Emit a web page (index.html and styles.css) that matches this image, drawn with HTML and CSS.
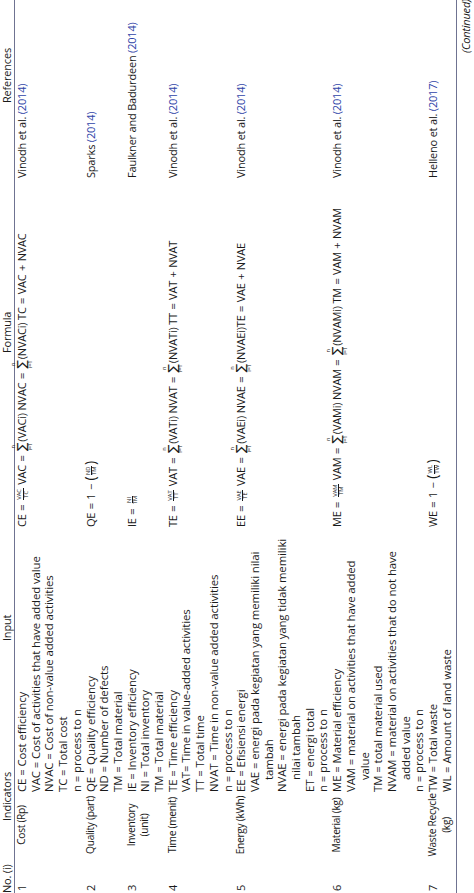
FILE: index.html
```html
<!DOCTYPE html>
<html>
<head>
<meta charset="utf-8">
<link rel="stylesheet" href="styles.css">
</head>
<body>
<div class="viewport">
  <div class="page">
    <div class="thead">
      <div class="th th-no">No. (i)</div>
      <div class="th">Indicators</div>
      <div class="th">Input</div>
      <div class="th">Formula</div>
      <div class="th">References</div>
    </div>
    <div class="tbody">
      <div class="row">
        <div class="no">1</div>
        <div class="ind"><span>Cost (Rp)</span></div>
        <div class="inp">
          <div class="ln">CE = Cost efficiency</div>
          <div class="ln">VAC = Cost of activities that have added value</div>
          <div class="ln">NVAC = Cost of non-value added activities</div>
          <div class="ln">TC = Total cost</div>
          <div class="ln">n = process to n</div>
        </div>
        <div class="fml">CE<span class="eq">=</span><span class="frac"><span class="nu">VAC</span><span class="de">TC</span></span> VAC<span class="eq">=</span><span class="sum"><span class="up">n</span><span class="sig">∑</span><span class="dn">i=1</span></span>(VACi) NVAC<span class="eq">=</span><span class="sum"><span class="up">n</span><span class="sig">∑</span><span class="dn">i=1</span></span>(NVACi) TC<span class="eq">=</span>VAC<span class="op">+</span>NVAC</div>
        <div class="ref">Vinodh et al. <span class="yr">(2014)</span></div>
      </div>
      <div class="row">
        <div class="no">2</div>
        <div class="ind"><span>Quality (part)</span></div>
        <div class="inp">
          <div class="ln">QE = Quality efficiency</div>
          <div class="ln">ND = Number of defects</div>
          <div class="ln">TM = Total material</div>
        </div>
        <div class="fml">QE<span class="eq">=</span>1<span class="op">−</span><span class="bp">(</span><span class="frac"><span class="nu">ND</span><span class="de">TM</span></span><span class="bp">)</span></div>
        <div class="ref">Sparks <span class="yr">(2014)</span></div>
      </div>
      <div class="row">
        <div class="no">3</div>
        <div class="ind"><span>Inventory</span><span>(unit)</span></div>
        <div class="inp">
          <div class="ln">IE = Inventory efficiency</div>
          <div class="ln">NI = Total inventory</div>
          <div class="ln">TM = Total material</div>
        </div>
        <div class="fml">IE<span class="eq">=</span><span class="frac"><span class="nu">NI</span><span class="de">TM</span></span></div>
        <div class="ref">Faulkner and Badurdeen <span class="yr">(2014)</span></div>
      </div>
      <div class="row">
        <div class="no">4</div>
        <div class="ind"><span>Time (menit)</span></div>
        <div class="inp">
          <div class="ln">TE = Time efficiency</div>
          <div class="ln">VAT= Time in value-added activities</div>
          <div class="ln">TT = Total time</div>
          <div class="ln">NVAT = Time in non-value added activities</div>
          <div class="ln">n = process to n</div>
        </div>
        <div class="fml">TE<span class="eq">=</span><span class="frac"><span class="nu">VAT</span><span class="de">TT</span></span> VAT<span class="eq">=</span><span class="sum"><span class="up">n</span><span class="sig">∑</span><span class="dn">i=1</span></span>(VATi) NVAT<span class="eq">=</span><span class="sum"><span class="up">n</span><span class="sig">∑</span><span class="dn">i=1</span></span>(NVATi) TT<span class="eq">=</span>VAT<span class="op">+</span>NVAT</div>
        <div class="ref">Vinodh et al. <span class="yr">(2014)</span></div>
      </div>
      <div class="row">
        <div class="no">5</div>
        <div class="ind"><span>Energy (kWh)</span></div>
        <div class="inp">
          <div class="ln">EE = Efisiensi energi</div>
          <div class="ln">VAE = energi pada kegiatan yang memiliki nilai</div>
          <div class="ln cont">tambah</div>
          <div class="ln">NVAE = energi pada kegiatan yang tidak memiliki</div>
          <div class="ln cont">nilai tambah</div>
          <div class="ln">ET = energi total</div>
          <div class="ln">n = process to n</div>
        </div>
        <div class="fml">EE<span class="eq">=</span><span class="frac"><span class="nu">VAE</span><span class="de">TE</span></span> VAE<span class="eq">=</span><span class="sum"><span class="up">n</span><span class="sig">∑</span><span class="dn">i=1</span></span>(VAEi) NVAE<span class="eq">=</span><span class="sum"><span class="up">n</span><span class="sig">∑</span><span class="dn">i=1</span></span>(NVAEi)TE<span class="eq">=</span>VAE<span class="op">+</span>NVAE</div>
        <div class="ref">Vinodh et al. <span class="yr">(2014)</span></div>
      </div>
      <div class="row">
        <div class="no">6</div>
        <div class="ind"><span>Material (kg)</span></div>
        <div class="inp">
          <div class="ln">ME = Material efficiency</div>
          <div class="ln">VAM = material on activities that have added</div>
          <div class="ln cont">value</div>
          <div class="ln">TM = total material used</div>
          <div class="ln">NVAM = material on activities that do not have</div>
          <div class="ln cont">added value</div>
          <div class="ln">n = process to n</div>
        </div>
        <div class="fml">ME<span class="eq">=</span><span class="frac"><span class="nu">VAM</span><span class="de">TM</span></span> VAM<span class="eq">=</span><span class="sum"><span class="up">n</span><span class="sig">∑</span><span class="dn">i=1</span></span>(VAMi) NVAM<span class="eq">=</span><span class="sum"><span class="up">n</span><span class="sig">∑</span><span class="dn">i=1</span></span>(NVAMi) TM<span class="eq">=</span>VAM<span class="op">+</span>NVAM</div>
        <div class="ref">Vinodh et al. <span class="yr">(2014)</span></div>
      </div>
      <div class="row">
        <div class="no">7</div>
        <div class="ind"><span>Waste Recycle</span><span>(kg)</span></div>
        <div class="inp">
          <div class="ln">TW = Total waste</div>
          <div class="ln">WL = Amount of land waste</div>
        </div>
        <div class="fml">WE<span class="eq">=</span>1<span class="op">−</span><span class="bp">(</span><span class="frac"><span class="nu">WL</span><span class="de">TW</span></span><span class="bp">)</span></div>
        <div class="ref">Helleno et al. <span class="yr">(2017)</span></div>
      </div>
    </div>
    <div class="continued">(Continued)</div>
  </div>
</div>
</body>
</html>
```

FILE: styles.css
```css
html, body {
  margin: 0;
  padding: 0;
  background: #ffffff;
}

.viewport {
  width: 474px;
  height: 893px;
  overflow: hidden;
}

.page {
  width: 893px;
  height: 474px;
  transform-origin: 0 0;
  transform: translateY(893px) rotate(-90deg);
  font-family: "Open Sans", "Noto Sans", sans-serif;
  font-size: 11px;
  line-height: 13.7px;
  color: #1a1a1a;
}

.thead {
  display: grid;
  grid-template-columns: 72px 180px 288px 250px 103px;
  height: 14px;
  border-bottom: 1px solid #6f7391;
}

.th {
  white-space: nowrap;
  margin-top: -0.5px;
  letter-spacing: -0.2px;
}

.tbody {
  padding-bottom: 2.5px;
  border-bottom: 1px solid #6f7391;
}

.row {
  display: grid;
  grid-template-columns: 38px 63px 265px 349px 178px;
}

.no {
  padding-left: 2px;
}

.ind {
  display: flex;
  flex-direction: column;
  align-items: center;
  white-space: nowrap;
  font-size: 10.2px;
  letter-spacing: -0.3px;
  padding-right: 3px;
}

.inp {
  display: flex;
  flex-direction: column;
  align-items: flex-start;
}

.ln {
  white-space: nowrap;
  font-size: 11.4px;
  letter-spacing: -0.1px;
}

.ln.cont {
  padding-left: 12px;
}

.fml {
  white-space: nowrap;
  letter-spacing: -0.2px;
}

.eq {
  margin: 0 3.5px;
}

.op {
  margin: 0 3.5px;
}

.frac {
  display: inline-flex;
  flex-direction: column;
  align-items: center;
  vertical-align: middle;
  font-size: 5.8px;
  line-height: 5.2px;
  letter-spacing: 0;
  margin: 0 1px;
}

.frac .nu {
  border-bottom: 0.6px solid currentColor;
  padding: 0 0.5px;
}

.sum {
  display: inline-flex;
  flex-direction: column;
  align-items: center;
  vertical-align: top;
  margin: 0 1px;
}

.sum .up,
.sum .dn {
  font-size: 5.8px;
  line-height: 6px;
  height: 6px;
}

.sum .up {
  margin-top: -5px;
  margin-bottom: -1px;
}

.sum .dn {
  margin-top: -2px;
  margin-bottom: -4px;
}

.sig {
  font-family: "DejaVu Sans", sans-serif;
  font-size: 12.5px;
  line-height: 13.7px;
}

.bp {
  font-size: 14px;
  line-height: 0;
}

.ref {
  white-space: nowrap;
  letter-spacing: -0.2px;
}

.yr {
  color: #2f43a8;
}

.continued {
  text-align: right;
  font-style: italic;
  margin-top: 2px;
  margin-right: -1px;
  letter-spacing: -0.2px;
}
```
